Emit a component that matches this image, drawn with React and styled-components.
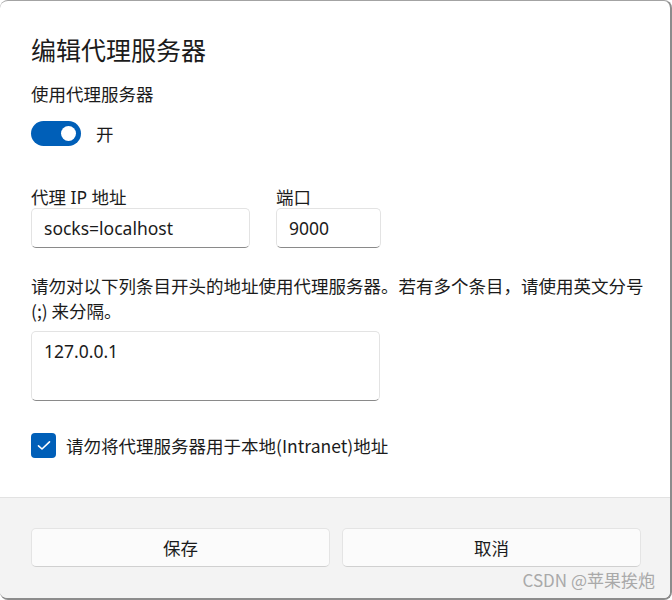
import React from "react";
import styled, { createGlobalStyle } from "styled-components";

const GlobalStyle = createGlobalStyle`
  html, body {
    margin: 0;
    padding: 0;
    background: #ffffff;
  }
  body {
    font-family: "Segoe UI", "Noto Sans", "Noto Sans CJK SC", sans-serif;
    color: #1b1b1b;
  }
`;

const Dialog = styled.div`
  position: relative;
  box-sizing: border-box;
  width: 672px;
  height: 600px;
  display: flex;
  flex-direction: column;
  background: #ffffff;
  border-top: 1px solid #a3a3a3;
  border-right: 2px solid #8c8c8c;
  border-bottom: 2px solid #8c8c8c;
  border-radius: 8px;
  overflow: hidden;
`;

const Content = styled.div`
  flex: 1;
  display: flex;
  flex-direction: column;
  padding: 31px 0 0 31px;
`;

const Title = styled.h1`
  margin: 0;
  font-size: 25px;
  line-height: 34px;
  font-weight: 400;
  font-family: "Noto Sans CJK SC", sans-serif;
`;

const Subheading = styled.div`
  margin-top: 15px;
  font-size: 17.5px;
  line-height: 25px;
  font-family: "Noto Sans CJK SC", sans-serif;
`;

const ToggleRow = styled.div`
  margin-top: 15px;
  display: flex;
  align-items: center;
  gap: 15px;
  height: 25px;
`;

const Toggle = styled.div`
  position: relative;
  width: 50px;
  height: 25px;
  border-radius: 13px;
  background: ${(p) => (p.$on ? "#005fb8" : "#ffffff")};

  &::after {
    content: "";
    position: absolute;
    top: 5px;
    right: 5px;
    width: 15px;
    height: 15px;
    border-radius: 50%;
    background: #ffffff;
  }
`;

const ToggleText = styled.span`
  font-size: 17.5px;
  font-family: "Noto Sans CJK SC", sans-serif;
  line-height: 25px;
`;

const FieldRow = styled.div`
  margin-top: 40px;
  display: flex;
  gap: 26px;
`;

const Field = styled.div`
  display: flex;
  flex-direction: column;
`;

const Label = styled.label`
  font-size: 17.5px;
  line-height: 22px;
  font-family: "Segoe UI", "Noto Sans", "Noto Sans CJK SC", sans-serif;
`;

const TextBox = styled.div`
  box-sizing: border-box;
  width: ${(p) => p.$w}px;
  height: ${(p) => p.$h || 40}px;
  padding: ${(p) => (p.$multi ? "7px 12px" : "0 12px")};
  display: flex;
  align-items: ${(p) => (p.$multi ? "flex-start" : "center")};
  background: #ffffff;
  border: 1px solid #e3e3e3;
  border-bottom: 1px solid #8a8a8a;
  border-radius: 5px;
  font-size: 17.5px;
  line-height: 24px;
  font-family: "Segoe UI", "Noto Sans", sans-serif;
  color: #1b1b1b;
`;

const Description = styled.p`
  margin: 25px 0 0;
  font-size: 17.5px;
  line-height: 25px;
  font-family: "Noto Sans CJK SC", sans-serif;
`;

const AreaWrap = styled.div`
  margin-top: 8px;
`;

const CheckRow = styled.div`
  margin-top: 32px;
  display: flex;
  align-items: center;
  gap: 10px;
`;

const CheckBox = styled.div`
  width: 25px;
  height: 25px;
  border-radius: 4px;
  background: #005fb8;
  display: flex;
  align-items: center;
  justify-content: center;
`;

const CheckText = styled.span`
  font-size: 17.5px;
  line-height: 25px;
  font-family: "Noto Sans CJK SC", sans-serif;
`;

const Footer = styled.div`
  height: 101px;
  box-sizing: border-box;
  background: #f3f3f3;
  border-top: 1px solid #e2e2e2;
  padding: 30px 29px 0 31px;
  display: grid;
  grid-template-columns: 1fr 1fr;
  gap: 12px;
  align-items: start;
`;

const Button = styled.button`
  height: 39px;
  background: #fbfbfb;
  border: 1px solid #e4e4e4;
  border-bottom-color: #d0d0d0;
  border-radius: 5px;
  font-size: 17.5px;
  font-family: "Noto Sans CJK SC", sans-serif;
  color: #1b1b1b;
  padding: 0;
`;

const Watermark = styled.div`
  position: absolute;
  right: 15px;
  bottom: 7px;
  font-size: 17px;
  line-height: 22px;
  color: #a9a9a9;
  font-family: "Noto Sans CJK SC", sans-serif;
`;

export default function App() {
  return (
    <>
      <GlobalStyle />
      <Dialog>
        <Content>
          <Title>编辑代理服务器</Title>
          <Subheading>使用代理服务器</Subheading>
          <ToggleRow>
            <Toggle $on />
            <ToggleText>开</ToggleText>
          </ToggleRow>
          <FieldRow>
            <Field>
              <Label>代理 IP 地址</Label>
              <TextBox $w={219}>socks=localhost</TextBox>
            </Field>
            <Field>
              <Label>端口</Label>
              <TextBox $w={105}>9000</TextBox>
            </Field>
          </FieldRow>
          <Description>
            请勿对以下列条目开头的地址使用代理服务器。若有多个条目，请使用英文分号
            <br />
            (;) 来分隔。
          </Description>
          <AreaWrap>
            <TextBox $w={349} $h={70} $multi>
              127.0.0.1
            </TextBox>
          </AreaWrap>
          <CheckRow>
            <CheckBox>
              <svg width="14" height="11" viewBox="0 0 14 11" fill="none">
                <polyline
                  points="1.5,5.8 5,9 12.5,1.8"
                  stroke="#ffffff"
                  strokeWidth="1.6"
                  strokeLinecap="round"
                  strokeLinejoin="round"
                />
              </svg>
            </CheckBox>
            <CheckText>请勿将代理服务器用于本地(Intranet)地址</CheckText>
          </CheckRow>
        </Content>
        <Footer>
          <Button>保存</Button>
          <Button>取消</Button>
        </Footer>
        <Watermark>CSDN @苹果挨炮</Watermark>
      </Dialog>
    </>
  );
}
